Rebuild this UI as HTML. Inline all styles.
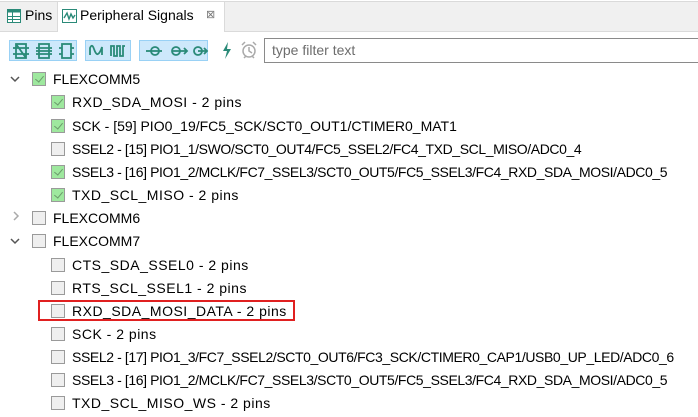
<!DOCTYPE html>
<html><head><style>
body{margin:0;width:698px;height:417px;background:#fff;font-family:"Liberation Sans",sans-serif;font-size:14px;color:#000;position:relative;overflow:hidden}
.tabbar{position:absolute;left:0;top:1px;width:698px;height:29px;background:#f0f0f0;border-top:1px solid #dadada;border-bottom:1px solid #dadada}
.tab{position:absolute;top:0;height:29px;line-height:27px}
.t1{left:0;width:56px}
.t2{left:57px;width:166px;background:#fff;height:30px;border-left:1px solid #dadada;border-right:1px solid #dadada}
.row{position:absolute;height:22px;line-height:22px;white-space:nowrap;letter-spacing:0.5px}
.row.l{letter-spacing:-0.4px}
.cb{position:absolute;width:14px;height:14px;border:1px solid #9a9a9a;background:#efefef;box-sizing:border-box}
.cb.on{background:#9ee89e}
.cb.on:after{content:"";position:absolute;left:3.5px;top:1px;width:4px;height:7px;border-right:1.5px solid #6a9a6a;border-bottom:1.5px solid #6a9a6a;transform:rotate(40deg)}
.tb{position:absolute;top:40px;height:21px;background:#cde8fb;border:1px solid #99d1f5;box-sizing:border-box}
.filter{position:absolute;left:264px;top:38px;width:440px;height:25px;border:1px solid #8a8a8a;box-sizing:border-box;color:#6d6d6d;line-height:23px;padding-left:7px;font-size:14px}
</style></head><body>
<div class="tabbar">
 <div class="tab t1"><svg style="position:absolute;left:7px;top:7px" width="14" height="14"><rect x="0.5" y="0.5" width="13" height="13" fill="#fff" stroke="#2a8a78"/><rect x="0.5" y="0.5" width="13" height="3" fill="#2a8a78"/><path d="M0 7.5H14M0 10.5H14M5.5 0V14" stroke="#2a8a78"/></svg><span style="position:absolute;left:25px">Pins</span></div>
 <div class="tab t2"><svg style="position:absolute;left:4px;top:7px" width="15" height="14"><rect x="0.5" y="0.5" width="14" height="13" fill="#fff" stroke="#2a8a78"/><path d="M2 9L5 4L7 10L9 5L11 9L13 6" stroke="#2a8a78" fill="none" stroke-width="1.4"/></svg><span style="position:absolute;left:22px">Peripheral Signals</span><span style="position:absolute;left:148px;font-size:11px;color:#777">⊠</span></div>
</div>
<div class="tb" style="left:9px;width:68px"></div>
<div class="tb" style="left:85px;width:46px"></div>
<div class="tb" style="left:139px;width:69px"></div>
<svg style="position:absolute;left:9px;top:40px" width="200" height="22" fill="none" stroke="#2a8a78" stroke-width="1.8">
 <rect x="7" y="4" width="10" height="14"/><path d="M4 8H20M4 14H20M7 4L17 18"/>
 <rect x="30" y="4" width="10" height="14"/><path d="M27 8H43M27 14H43M27 11H43"/>
 <rect x="53" y="4" width="9" height="14"/><path d="M50 8H53M50 14H53M62 8H65M62 14H65"/>
 <path d="M81 15V8Q83 3 85 9T89 14T93 7V15"/>
 <path d="M102 16V6H105V16H108V6H111V16H114V6H116"/>
 <circle cx="146" cy="11" r="4"/><path d="M137 11H153"/>
 <circle cx="167" cy="11" r="4"/><path d="M163 11H178M175 8L178 11L175 14"/>
 <circle cx="189" cy="11" r="4"/><path d="M189 11H198M195 8L198 11L195 14"/>
</svg>
<svg style="position:absolute;left:222px;top:42px" width="10" height="18"><path d="M6 0L1 9H5L3 17L9 7H5Z" fill="#2a8a78"/></svg>
<svg style="position:absolute;left:240px;top:41px" width="18" height="19" fill="none" stroke="#aaa" stroke-width="1.5"><circle cx="9" cy="10" r="6"/><path d="M9 6V10L12 12M2 4L5 1M16 4L13 1M4 17L6 15M14 17L12 15"/></svg>
<div class="filter">type filter text</div>

<svg style="position:absolute;left:0;top:0" width="30" height="250" fill="none" stroke="#555" stroke-width="1.5">
 <path d="M11 77L15 81L19 77"/>
 <path d="M14 212L18 216L14 220" stroke="#aaa"/>
 <path d="M11 239L15 243L19 239"/>
</svg>
<div class="cb on" style="left:32px;top:72px"></div><div class="row" style="left:53px;top:68px;letter-spacing:0">FLEXCOMM5</div>
<div class="cb on" style="left:51px;top:95px"></div><div class="row" style="left:72px;top:91px">RXD_SDA_MOSI - 2 pins</div>
<div class="cb on" style="left:51px;top:119px"></div><div class="row" style="left:72px;top:115px;letter-spacing:0">SCK - [59] PIO0_19/FC5_SCK/SCT0_OUT1/CTIMER0_MAT1</div>
<div class="cb" style="left:51px;top:142px"></div><div class="row l" style="left:72px;top:138px">SSEL2 - [15] PIO1_1/SWO/SCT0_OUT4/FC5_SSEL2/FC4_TXD_SCL_MISO/ADC0_4</div>
<div class="cb on" style="left:51px;top:165px"></div><div class="row l" style="left:72px;top:161px">SSEL3 - [16] PIO1_2/MCLK/FC7_SSEL3/SCT0_OUT5/FC5_SSEL3/FC4_RXD_SDA_MOSI/ADC0_5</div>
<div class="cb on" style="left:51px;top:188px"></div><div class="row" style="left:72px;top:184px">TXD_SCL_MISO - 2 pins</div>
<div class="cb" style="left:32px;top:211px"></div><div class="row" style="left:53px;top:207px;letter-spacing:0">FLEXCOMM6</div>
<div class="cb" style="left:32px;top:234px"></div><div class="row" style="left:53px;top:230px;letter-spacing:0">FLEXCOMM7</div>
<div class="cb" style="left:51px;top:258px"></div><div class="row" style="left:72px;top:254px">CTS_SDA_SSEL0 - 2 pins</div>
<div class="cb" style="left:51px;top:281px"></div><div class="row" style="left:72px;top:277px">RTS_SCL_SSEL1 - 2 pins</div>
<div style="position:absolute;left:38px;top:300px;width:257px;height:21px;border:2px solid #e02020;box-sizing:border-box"></div>
<div class="cb" style="left:51px;top:304px"></div><div class="row" style="left:72px;top:300px">RXD_SDA_MOSI_DATA - 2 pins</div>
<div class="cb" style="left:51px;top:327px"></div><div class="row" style="left:72px;top:323px">SCK - 2 pins</div>
<div class="cb" style="left:51px;top:350px"></div><div class="row l" style="left:72px;top:346px">SSEL2 - [17] PIO1_3/FC7_SSEL2/SCT0_OUT6/FC3_SCK/CTIMER0_CAP1/USB0_UP_LED/ADC0_6</div>
<div class="cb" style="left:51px;top:373px"></div><div class="row l" style="left:72px;top:369px">SSEL3 - [16] PIO1_2/MCLK/FC7_SSEL3/SCT0_OUT5/FC5_SSEL3/FC4_RXD_SDA_MOSI/ADC0_5</div>
<div class="cb" style="left:51px;top:396px"></div><div class="row" style="left:72px;top:392px">TXD_SCL_MISO_WS - 2 pins</div>
</body></html>
